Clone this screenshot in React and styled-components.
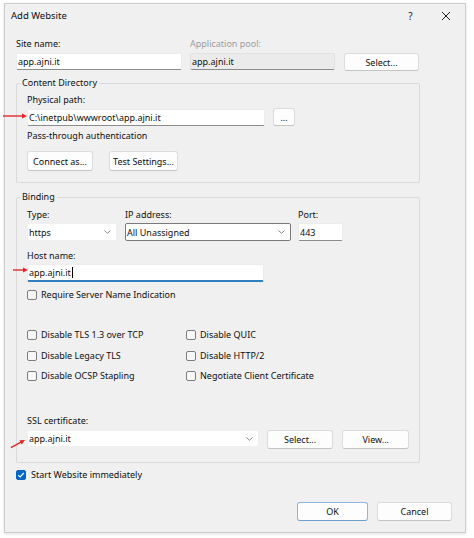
import React from 'react';
import styled, { createGlobalStyle } from 'styled-components';

const GlobalStyle = createGlobalStyle`
  html, body {
    margin: 0;
    padding: 0;
    background: #ffffff;
  }
  body {
    font-family: "Noto Sans", "Open Sans", "Liberation Sans", sans-serif;
    font-size: 9px;
    color: #0f0f0f;
  }
`

const Page = styled.div`
  position: relative;
  width: 474px;
  height: 538px;
  padding: 3px 0 0 4px;
  box-sizing: border-box;
`
const Window = styled.div`
  width: 462px;
  height: 530px;
  box-sizing: border-box;
  background: #f0f0f0;
  border: 1px solid #cdcdcd;
  box-shadow: 0 1px 3px rgba(0, 0, 0, 0.12);
  display: flex;
  flex-direction: column;
`
const TitleBar = styled.div`
  height: 23px;
  display: flex;
  align-items: center;
  padding: 0 2px 0 6px;
  font-size: 9.5px;
`
const Title = styled.div`
  flex: 1;
`
const TitleButton = styled.div`
  width: 35px;
  height: 23px;
  display: flex;
  align-items: center;
  justify-content: center;
  font-size: 10px;
  color: #222;
`
const Body = styled.div`
  flex: 1;
  padding: 11px 13px 0 11px;
  display: flex;
  flex-direction: column;
`
const Row = styled.div`
  display: flex;
  align-items: flex-end;
  gap: ${p => p.gap || 8}px;
  margin-top: ${p => p.mt || 0}px;
`
const Field = styled.div`
  display: flex;
  flex-direction: column;
  width: ${p => p.w}px;
`
const Label = styled.div`
  line-height: 12px;
  margin-bottom: ${p => p.mb ?? 3}px;
  margin-top: ${p => p.mt || 0}px;
  color: ${p => (p.disabled ? '#9d9d9d' : 'inherit')};
  white-space: nowrap;
`
const TextBox = styled.div`
  width: ${p => p.w ? p.w + 'px' : 'auto'};
  height: ${p => p.h || 17}px;
  box-sizing: border-box;
  background: ${p => (p.disabled ? '#ebebeb' : '#ffffff')};
  border: 1px solid ${p => (p.disabled ? '#e2e2e2' : '#ececec')};
  border-bottom: ${p => (p.focused ? '2px solid #2f7fc1' : '1px solid #8c8c8c')};
  border-radius: 2px;
  padding: 0 1px;
  display: flex;
  align-items: center;
  white-space: nowrap;
`
const Caret = styled.span`
  display: inline-block;
  width: 1px;
  height: 11px;
  background: #000;
  margin-left: 1px;
`
const SelectBox = styled.div`
  width: ${p => p.w}px;
  height: ${p => p.h || 18}px;
  box-sizing: border-box;
  background: #ffffff;
  border: 1px solid ${p => (p.strong ? '#7a7a7a' : '#efefef')};
  border-radius: 2px;
  padding: 0 5px 0 1px;
  display: flex;
  align-items: center;
  justify-content: space-between;
`
const Button = styled.div`
  width: ${p => p.w}px;
  height: ${p => p.h || 19}px;
  box-sizing: border-box;
  background: #fdfdfd;
  border: 1px solid ${p => (p.primary ? '#8fb6dc' : '#dcdcdc')};
  border-bottom-color: ${p => (p.primary ? '#6d9fcf' : '#c4c4c4')};
  border-radius: 3px;
  display: flex;
  align-items: center;
  justify-content: center;
  white-space: nowrap;
`
const Group = styled.fieldset`
  width: 404px;
  box-sizing: border-box;
  margin: ${p => p.mt || 0}px 0 0 0;
  padding: ${p => p.pt || 5}px 10px ${p => p.pb || 11}px 10px;
  border: 1px solid #dadada;
  border-radius: 2px;
  min-width: 0;
`
const Legend = styled.legend`
  line-height: 12px;
  padding: 0 2px;
  margin-left: -7px;
`
const Line = styled.div`
  line-height: 12px;
  margin-top: ${p => p.mt || 0}px;
`
const CheckRow = styled.label`
  display: flex;
  align-items: center;
  gap: ${p => p.gap || 4}px;
  line-height: 12px;
  margin-top: ${p => p.mt || 0}px;
  white-space: nowrap;
`
const Box = styled.span`
  width: 10px;
  height: 10px;
  flex: none;
  box-sizing: border-box;
  border-radius: 2px;
  border: 1px solid ${p => (p.checked ? '#0067c0' : '#7d7d7d')};
  background: ${p => (p.checked ? '#0067c0' : '#f7f7f7')};
  display: flex;
  align-items: center;
  justify-content: center;
`
const CheckGrid = styled.div`
  display: grid;
  grid-template-columns: 159px auto;
  row-gap: 8.5px;
  margin-top: 28px;
`
const Footer = styled.div`
  display: flex;
  justify-content: flex-end;
  gap: 9px;
  margin-top: 21px;
`
const Arrow = styled.svg`
  position: absolute;
  left: ${p => p.x}px;
  top: ${p => p.y}px;
  overflow: visible;
`

const Chevron = () => (
  <svg width="7" height="4" viewBox="0 0 7 4">
    <path d="M0.5 0.5 L3.5 3.3 L6.5 0.5" fill="none" stroke="#7a7a7a" strokeWidth="0.9" />
  </svg>
);

const CloseIcon = () => (
  <svg width="10" height="10" viewBox="0 0 10 10">
    <path d="M1 1 L9 9 M9 1 L1 9" stroke="#222" strokeWidth="1" />
  </svg>
);

const Tick = () => (
  <svg width="8" height="8" viewBox="0 0 8 8" style={{ display: 'block' }}>
    <path d="M1.3 4.2 L3.2 6 L6.8 2" fill="none" stroke="#ffffff" strokeWidth="1.2" />
  </svg>
);

const Check = ({ label, checked, gap }) => (
  <CheckRow gap={gap}>
    <Box checked={checked}>{checked && <Tick />}</Box>
    {label}
  </CheckRow>
);

const Select = ({ w, value, strong }) => (
  <SelectBox w={w} strong={strong}>
    <span>{value}</span>
    <Chevron />
  </SelectBox>
);

const RedArrow = ({ x, y, len, angle = 0 }) => (
  <Arrow x={x} y={y} width={len} height="6" style={{ transform: `rotate(${angle}deg)`, transformOrigin: `${len}px 3px` }}>
    <path d={`M0 3 L${len - 4} 3`} stroke="#e3262b" strokeWidth="1.4" />
    <path d={`M${len - 5} 0.6 L${len} 3 L${len - 5} 5.4 Z`} fill="#e3262b" />
  </Arrow>
);

export default function App() {
  return (
    <>
      <GlobalStyle />
      <Page>
        <Window>
          <TitleBar>
            <Title>Add Website</Title>
            <TitleButton>?</TitleButton>
            <TitleButton><CloseIcon /></TitleButton>
          </TitleBar>
          <Body>
            <Row gap={8}>
              <Field w={166}>
                <Label>Site name:</Label>
                <TextBox>app.ajni.it</TextBox>
              </Field>
              <Field w={145}>
                <Label disabled>Application pool:</Label>
                <TextBox disabled>app.ajni.it</TextBox>
              </Field>
              <Button w={75} h={18} style={{ marginLeft: 1, marginBottom: -1 }}>Select...</Button>
            </Row>

            <Group mt={7} pt={5} pb={11}>
              <Legend>Content Directory</Legend>
              <Label mb={2}>Physical path:</Label>
              <Row gap={8}>
                <TextBox w={238}>C:\inetpub\wwwroot\app.ajni.it</TextBox>
                <Button w={22} h={18}>...</Button>
              </Row>
              <Line mt={4}>Pass-through authentication</Line>
              <Row gap={16} mt={9}>
                <Button w={66} h={20}>Connect as...</Button>
                <Button w={69} h={20}>Test Settings...</Button>
              </Row>
            </Group>

            <Group mt={8} pt={6} pb={13}>
              <Legend>Binding</Legend>
              <Row gap={8}>
                <Field w={90}>
                  <Label mb={2}>Type:</Label>
                  <Select w={90} value="https" />
                </Field>
                <Field w={166}>
                  <Label mb={2}>IP address:</Label>
                  <Select w={166} value="All Unassigned" strong />
                </Field>
                <Field w={45} style={{ marginLeft: -1 }}>
                  <Label mb={2}>Port:</Label>
                  <TextBox h={18}>443</TextBox>
                </Field>
              </Row>
              <Label mt={9} mb={2}>Host name:</Label>
              <TextBox w={237} h={18} focused>app.ajni.it<Caret /></TextBox>
              <CheckRow mt={7}>
                <Box />
                Require Server Name Indication
              </CheckRow>
              <CheckGrid>
                <Check label="Disable TLS 1.3 over TCP" />
                <Check label="Disable QUIC" />
                <Check label="Disable Legacy TLS" />
                <Check label="Disable HTTP/2" />
                <Check label="Disable OCSP Stapling" />
                <Check label="Negotiate Client Certificate" />
              </CheckGrid>
              <Label mt={33}>SSL certificate:</Label>
              <Row gap={8} style={{ alignItems: 'flex-start' }}>
                <SelectBox w={233} h={17}>
                  <span>app.ajni.it</span>
                  <Chevron />
                </SelectBox>
                <Button w={67}>Select...</Button>
                <Button w={67} style={{ marginLeft: 1 }}>View...</Button>
              </Row>
            </Group>

            <CheckRow mt={6} gap={5}>
              <Box checked><Tick /></Box>
              Start Website immediately
            </CheckRow>

            <Footer>
              <Button w={71} primary>OK</Button>
              <Button w={75}>Cancel</Button>
            </Footer>
          </Body>
        </Window>
        <RedArrow x={3} y={113} len={24} />
        <RedArrow x={13} y={267} len={15} />
        <RedArrow x={9} y={437} len={16} angle={-28} />
      </Page>
    </>
  );
}
